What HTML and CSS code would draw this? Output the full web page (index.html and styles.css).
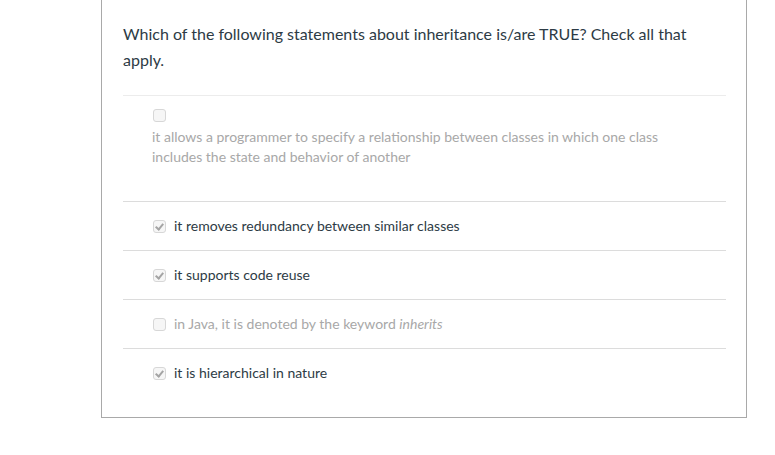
FILE: index.html
```html
<!DOCTYPE html>
<html lang="en">
<head>
    <meta charset="UTF-8">
    <title>Quiz Question</title>
    <link rel="stylesheet" href="styles.css">
</head>
<body>
    <div class="question">
        <div class="question-text">
            Which of the following statements about inheritance is/are TRUE? Check all that apply.
        </div>

        <div class="answers">
            <!-- long answer wraps below its checkbox -->
            <label class="answer answer-long muted">
                <span class="box"></span>
                <span class="answer-text">it allows a programmer to specify a relationship between classes in which one class includes the state and behavior of another</span>
            </label>
            <label class="answer">
                <span class="box checked"></span>
                <span class="answer-text">it removes redundancy between similar classes</span>
            </label>
            <label class="answer">
                <span class="box checked"></span>
                <span class="answer-text">it supports code reuse</span>
            </label>
            <label class="answer muted">
                <span class="box"></span>
                <span class="answer-text">in Java, it is denoted by the keyword <em>inherits</em></span>
            </label>
            <label class="answer">
                <span class="box checked"></span>
                <span class="answer-text">it is hierarchical in nature</span>
            </label>
        </div>
    </div>
</body>
</html>
```

FILE: styles.css
```css
body {
    margin: 0;
    padding: 0;
    background-color: #fff;
    font-family: Lato, "Liberation Sans", sans-serif;
    color: #2d3b45;
}
.question {
    margin-left: 101px;
    width: 603px;
    padding: 21px 20px 20px 21px;
    border: 1px solid #a9a9a9;
    border-top: none;
}
.question-text {
    font-size: 16px;
    line-height: 26px;
    padding-right: 30px;
    margin-bottom: 22px;
}
.answers {
    border-top: 1px solid #ececec;
}
.answer {
    display: flex;
    align-items: center;
    padding: 14px 0 14px 29px;
    font-size: 14px;
    line-height: 20px;
    border-bottom: 1px solid #dcdcdc;
}
.answer:last-child {
    border-bottom: none;
}
.answer-long {
    display: block;
    padding-bottom: 34px;
}
.answer-long .box {
    display: block;
    margin: -1px 0 5px 1px;
}
.answer-long .answer-text {
    display: block;
    margin-left: 0;
    padding-right: 60px;
}
.muted {
    color: #a8a8a8;
}
.box {
    box-sizing: border-box;
    width: 13px;
    height: 13px;
    border: 1px solid #d7d7d7;
    border-radius: 3px;
    background-color: #f6f6f6;
    margin-left: 1px;
    flex-shrink: 0;
    position: relative;
}
.box.checked::after {
    content: "";
    position: absolute;
    left: 3px;
    top: 1px;
    width: 3px;
    height: 6px;
    border: solid #a4a4a4;
    border-width: 0 2px 2px 0;
    transform: rotate(40deg);
}
.answer-text {
    margin-left: 8px;
}
```
